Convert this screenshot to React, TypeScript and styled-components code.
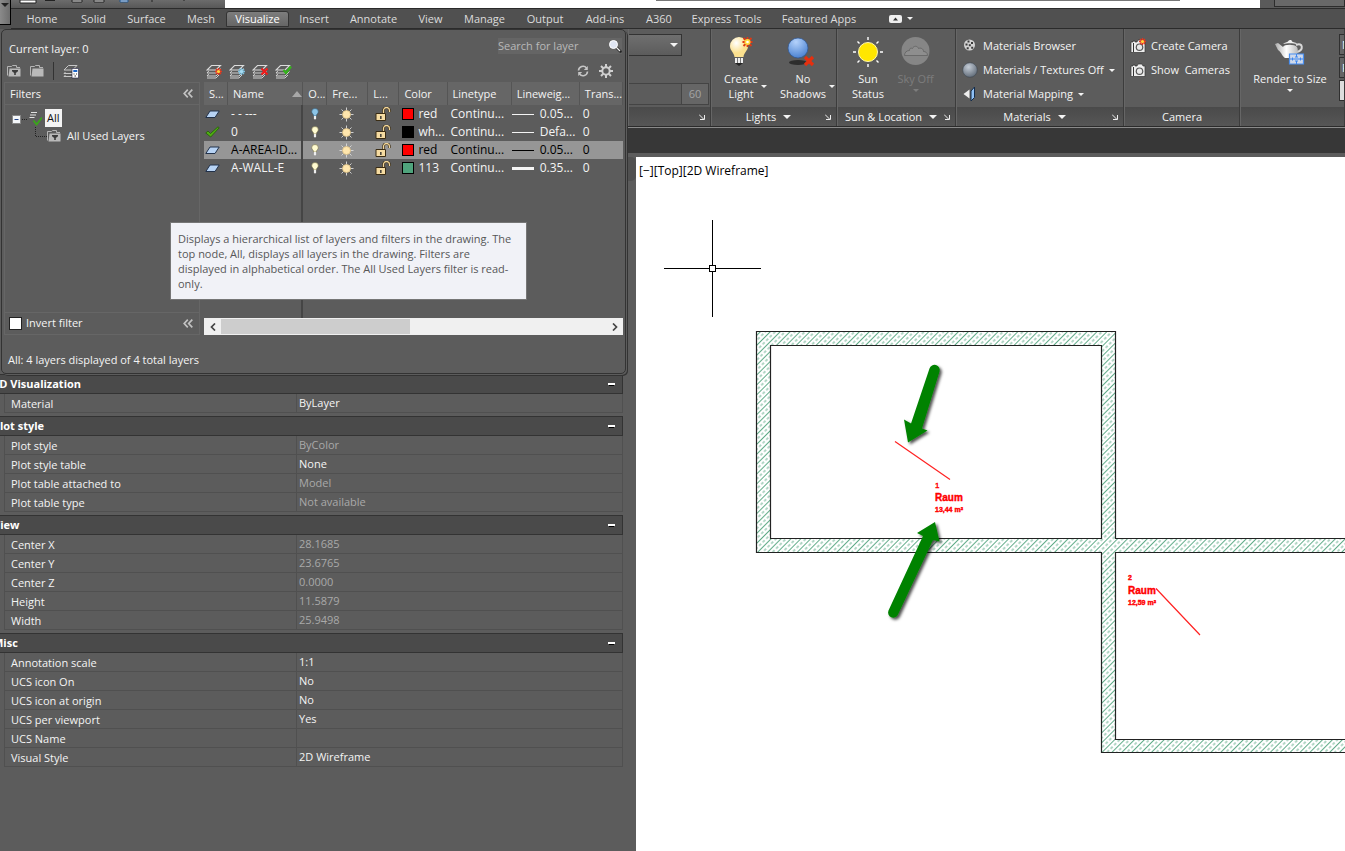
import React from "react";
import styled, { createGlobalStyle, css } from "styled-components";

const Global = createGlobalStyle`
  * { box-sizing: border-box; }
  body { margin: 0; background: #5c5c5c; color: #f4f4f4; font: 11px/16px "Open Sans", "Noto Sans", sans-serif; }
  button, input, select { font: inherit; color: inherit; margin: 0; padding: 0; border: 0; background: none; }
  svg { display: block; flex: none; }
`;

/* ---------- application frame ---------- */

const Page = styled.div`
  display: flex;
  flex-direction: column;
  min-height: 100vh;
  overflow: hidden;
`;

const Header = styled.header`
  display: flex;
  height: 29px;
  background: #505050;
`;

const AppButton = styled.button`
  width: 11px;
  height: 25px;
  background: linear-gradient(90deg, #8a8a8a, #6e6e6e);
  border-right: 1px solid #000;
  border-bottom: 1px solid #000;
  display: flex;
  justify-content: center;
`;

const HeaderMain = styled.div`
  flex: 1;
  min-width: 0;
`;

const TitleStrip = styled.div`
  display: flex;
  height: 8px;
  overflow: hidden;
`;

const QuickAccess = styled.div`
  width: 214px;
  background: linear-gradient(#6c6c6c, #585858);
`;

const TitleFill = styled.div`
  flex: 1;
  background: #fff;
  padding: 0 80px 0 431px;
`;

const TitleEdge = styled.div`
  height: 1px;
  background: #777;
`;

const HelpSearch = styled.div`
  width: 85px;
  background: #5a5a5a;
  padding-left: 14px;
  overflow: hidden;
`;

const HelpField = styled.div`
  height: 7px;
  border: 1px solid #2c2c2c;
  border-top: 0;
  background: #686868;
`;

const TabBar = styled.nav`
  display: flex;
  height: 21px;
  padding-left: 3px;
  border-top: 1px solid #2b2b2b;
  border-bottom: 1px solid #2b2b2b;
`;

const Tab = styled.button<{ $w: number; $active?: boolean }>`
  width: ${(p) => p.$w}px;
  height: 20px;
  color: #dcdcdc;
  white-space: nowrap;
  ${(p) =>
    p.$active &&
    css`
      color: #fff;
      margin-top: 2px;
      height: 16px;
      line-height: 14px;
      border: 1px solid #333;
      border-radius: 3px 3px 0 0;
      background: linear-gradient(#7d7d7d, #666);
    `}
`;

const MinimizeTabs = styled.button`
  display: flex;
  align-items: center;
  gap: 5px;
  margin-left: 22px;
`;

const Workspace = styled.main`
  flex: 1;
  display: flex;
`;

const Side = styled.aside`
  flex: 0 0 628px;
  overflow: hidden;
`;

const Work = styled.section`
  flex: 1;
  min-width: 0;
  display: flex;
  flex-direction: column;
`;

/* ---------- layer palette ---------- */

const Palette = styled.section`
  position: relative;
  width: 625px;
  margin-left: 1px;
  padding: 6px 2px 4px;
  border: 1px solid #333;
  border-radius: 5px;
  background: #5c5c5c;
  box-shadow: 1px 1px 0 #5c5c5c, 2px 2px 0 #333;
`;

const PaletteTop = styled.div`
  display: flex;
  justify-content: space-between;
  padding: 2px 1px 0 5px;
  height: 24px;
`;

const CurrentLayer = styled.div`
  padding-top: 3px;
`;

const SearchBox = styled.label`
  display: flex;
  align-items: center;
  width: 124px;
  height: 16px;
  background: #656565;
`;

const SearchInput = styled.input`
  width: 110px;
  height: 16px;
  outline: 0;
  &::placeholder { color: #b9b9b9; opacity: 1; }
`;

const Toolbar = styled.div`
  display: flex;
  align-items: center;
  height: 22px;
  padding: 0 10px 0 3px;
`;

const ToolGroup = styled.div<{ $w?: number; $gap: number }>`
  display: flex;
  align-items: center;
  gap: ${(p) => p.$gap}px;
  ${(p) => (p.$w ? `width: ${p.$w}px;` : "margin-left: auto;")}
`;

const Divider = styled.span`
  width: 1px;
  height: 18px;
  background: #333;
`;

const IconButton = styled.button`
  display: flex;
  align-items: center;
  justify-content: center;
`;

const PaletteBody = styled.div`
  display: flex;
  gap: 4px;
  height: 253px;
`;

const FilterPane = styled.div`
  width: 196px;
  display: flex;
  flex-direction: column;
  border: 1px solid #666;
`;

const PaneRow = styled.div<{ $foot?: boolean }>`
  display: flex;
  align-items: center;
  justify-content: space-between;
  height: 22px;
  padding: 0 6px 0 5px;
  border: 0 solid #666;
  ${(p) => (p.$foot ? "border-top-width: 1px; padding: 0 6px 1px 4px;" : "border-bottom-width: 1px;")}
`;

const Tree = styled.ul`
  flex: 1;
  margin: 0;
  padding: 4px 0 0 6px;
  list-style: none;
`;

const TreeItem = styled.li<{ $indent?: number }>`
  display: flex;
  align-items: center;
  height: 18px;
  padding-left: ${(p) => p.$indent || 0}px;
`;

const TreeLabel = styled.span<{ $on?: boolean }>`
  height: 18px;
  line-height: 18px;
  margin-left: ${(p) => (p.$on ? 3 : 4)}px;
  padding: 0 2px;
  ${(p) => p.$on && "background:#f4f4f4;color:#111;"}
`;

const CheckLabel = styled.label`
  display: flex;
  align-items: center;
  gap: 4px;
`;

const CheckBox = styled.input`
  appearance: none;
  width: 13px;
  height: 13px;
  background: #fff;
  border: 1px solid #222;
`;

const LayerPane = styled.div`
  flex: 1;
  min-width: 0;
  display: flex;
  flex-direction: column;
`;

const LayerTable = styled.table`
  flex: 1;
  width: 100%;
  table-layout: fixed;
  border-spacing: 0;
  th, td { padding: 0; text-align: left; font-weight: 400; white-space: nowrap; overflow: hidden; }
`;

const HeadCell = styled.th`
  height: 23px;
  background: #666;
  border-right: 1px solid #555;
`;

const HeadText = styled.div`
  padding-left: 5px;
  display: flex;
  justify-content: space-between;
  align-items: center;
`;

const Row = styled.tr<{ $on?: boolean }>`
  height: 18px;
  font-size: 12px;
  ${(p) => p.$on && "background:#969696;color:#000;"}
`;

const NameCell = styled.td`
  border-right: 2px solid #454545;
`;

const Cell = styled.div<{ $pad?: number; $gap?: number }>`
  display: flex;
  align-items: center;
  gap: ${(p) => p.$gap || 0}px;
  height: 18px;
  padding-left: ${(p) => p.$pad || 0}px;
`;

const Swatch = styled.span<{ $c: string }>`
  flex: none;
  width: 12px;
  height: 12px;
  border: 1px solid #000;
  background: ${(p) => p.$c};
`;

const Weight = styled.span<{ $h: number }>`
  flex: none;
  width: 22px;
  height: ${(p) => p.$h}px;
  background: currentColor;
`;

const ScrollBar = styled.div`
  display: flex;
  align-items: center;
  height: 17px;
  background: #f0f0f0;
`;

const ScrollButton = styled.button`
  width: 17px;
  height: 17px;
  display: flex;
  align-items: center;
  justify-content: center;
`;

const ScrollTrack = styled.div`
  flex: 1;
  height: 15px;
`;

const ScrollThumb = styled.div`
  width: 49%;
  height: 15px;
  background: #cdcdcd;
`;

const Status = styled.div`
  padding: 17px 0 0 4px;
  height: 34px;
`;

const Tooltip = styled.div`
  position: absolute;
  left: 168px;
  top: 192px;
  width: 357px;
  padding: 8px 6px 8px 7px;
  border: 1px solid #767676;
  background: #f1f2f7;
  color: #575757;
  line-height: 15px;
`;

/* ---------- property list ---------- */

const Section = styled.section`
  width: 623px;
  margin-bottom: 3px;
`;

const SectionHead = styled.button`
  display: flex;
  align-items: center;
  justify-content: space-between;
  width: 100%;
  height: 20px;
  padding-right: 7px;
  overflow: hidden;
  border: 1px solid #333;
  border-left: 0;
  background: #4a4a4a;
  color: #fff;
  font-weight: 700;
`;

const SectionTitle = styled.span`
  margin-left: -7px;
`;

const PropTable = styled.table`
  width: 619px;
  margin-left: 4px;
  table-layout: fixed;
  border-spacing: 0;
  border-left: 1px solid #505050;
  th, td {
    height: 19px;
    line-height: 16px;
    border-bottom: 1px solid #505050;
    text-align: left;
    font-weight: 400;
  }
`;

const PropName = styled.th`
  width: 291px;
  padding: 0 0 0 6px;
  vertical-align: bottom;
`;

const PropValue = styled.td<{ $dim?: boolean }>`
  padding: 0 0 0 2px;
  border-left: 1px solid #505050;
  border-right: 1px solid #505050;
  color: ${(p) => (p.$dim ? "#a9a9a9" : "#f4f4f4")};
`;

/* ---------- ribbon ---------- */

const Ribbon = styled.div`
  display: flex;
  height: 98px;
  border-bottom: 1px solid #2b2b2b;
`;

const Panel = styled.section<{ $w?: number }>`
  ${(p) => (p.$w ? `flex: 0 0 ${p.$w}px;` : "flex: 1 1 0;")}
  min-width: 0;
  display: flex;
  flex-direction: column;
  overflow: hidden;
  border-right: 1px solid #3c3c3c;
  border-left: 1px solid #666;
`;

const PanelBody = styled.div<{ $col?: boolean }>`
  flex: 1;
  display: flex;
  flex-direction: ${(p) => (p.$col ? "column" : "row")};
  padding-top: 5px;
`;

const PanelTitle = styled.div`
  display: flex;
  align-items: center;
  height: 19px;
  background: linear-gradient(#4a4a4a, #565656);
`;

const PanelName = styled.span`
  flex: 1;
  display: flex;
  align-items: center;
  justify-content: center;
  gap: 7px;
  white-space: nowrap;
`;

const LaunchButton = styled.button`
  padding: 0 5px 0 0;
`;

const BigButton = styled.button<{ $w: number; $off?: boolean }>`
  width: ${(p) => p.$w}px;
  display: flex;
  flex-direction: column;
  align-items: center;
  padding-top: 2px;
  line-height: 15px;
  white-space: nowrap;
  color: ${(p) => (p.$off ? "#7d7d7d" : "inherit")};
`;

const BigLabel = styled.span<{ $split?: boolean }>`
  display: flex;
  align-items: center;
  gap: 3px;
  padding: 3px 0 3px ${(p) => (p.$split ? 9 : 0)}px;
`;

const SmallButton = styled.button`
  display: flex;
  align-items: center;
  gap: 5px;
  height: 24px;
  padding-left: 5px;
  white-space: nowrap;
`;

const ComboBox = styled.button`
  width: 53px;
  height: 22px;
  display: flex;
  align-items: center;
  justify-content: flex-end;
  padding-right: 3px;
  border: 1px solid #333;
  border-left: 0;
  background: linear-gradient(#6f6f6f, #5c5c5c);
`;

const ValueRow = styled.div`
  display: flex;
  width: 80px;
  height: 22px;
  margin-top: 27px;
  border: 1px solid #444;
  border-left: 0;
  color: #a4a4a4;
`;

const ValueBox = styled.div`
  flex: 1;
  border-right: 1px solid #444;
`;

const ValueNumber = styled.div`
  width: 26px;
  line-height: 20px;
  text-align: center;
  background: #666;
`;

const EdgeStack = styled.div`
  margin-left: auto;
  width: 5px;
  display: flex;
  flex-direction: column;
  gap: 2px;
`;

const EdgeButton = styled.button<{ $light?: boolean }>`
  width: 20px;
  height: 21px;
  padding-left: 2px;
  text-align: left;
  border: 1px solid #2f2f2f;
  background: ${(p) => (p.$light ? "#ddd" : "#656565")};
`;

const FileBar = styled.div`
  height: 30px;
  border-top: 1px solid #8a8a8a;
  border-bottom: 4px solid #5c5c5c;
  background: #373737;
`;

const CanvasRow = styled.div`
  flex: 1;
  display: flex;
`;

const Grip = styled.div`
  width: 8px;
  height: 24px;
  border-radius: 0 5px 5px 0;
  background: #505050;
`;

const Canvas = styled.div`
  flex: 1;
  min-width: 0;
  position: relative;
  background: #fff;
`;

const Drawing = styled.svg`
  position: absolute;
  inset: 0;
  width: 100%;
  height: 100%;
`;

const ViewLabel = styled.div`
  position: relative;
  padding: 6px 0 0 3px;
  font-size: 12px;
  color: #000;
`;

/* ---------- icons ---------- */

const Caret = ({ s = 8 }: { s?: number }) => (
  <svg width={s} height={s / 2} viewBox="0 0 8 4"><path d="M0 0h8L4 4z" fill="currentColor" /></svg>
);

const Launcher = () => (
  <svg width="6" height="6" viewBox="0 0 6 6" fill="none" stroke="#eee"><path d="M0 .5l4.500 4.500M5.500 1v4.500H1" /></svg>
);

const Chevrons = () => (
  <svg width="10" height="9" viewBox="0 0 10 9" fill="none" stroke="#c2c2c2" strokeWidth="1.700"><path d="M4.800 .7L1.200 4.500 4.800 8.300M9.300 .7L5.700 4.500 9.300 8.300" /></svg>
);

const Folder = ({ filter }: { filter?: boolean }) => (
  <svg width="14" height="12" viewBox="0 0 14 12">
    <path d="M.5 10.500V1.500h4l1-1h4v2h3.500" fill="none" stroke="#b5b5b5" />
    <path d="M2.500 3.500H13.500v8H1.500z" fill="#b9b9b9" />
    {filter && <path d="M5 5h6v1.200L8.800 8v2H7.200V8L5 6.200z" fill="#3c3c3c" />}
  </svg>
);

const Sheets = () => (
  <g stroke="#dcdcdc" strokeWidth="1.100" fill="none">
    <path d="M5.500 1.500h9L10 6H1z" />
    <path d="M2.800 7L1 9h9l4.500-4.500M2.800 10L1 12h9l4.500-4.500M1 14h9l3-3" strokeWidth=".9" />
  </g>
);

const Spark = ({ x, y, c = "#e5351b", d = "#ffd83c" }: { x: number; y: number; c?: string; d?: string }) => (
  <g transform={`translate(${x} ${y})`}>
    <path d="M-3.500 0h7M0-3.500v7M-2.500-2.500l5 5M-2.500 2.500l5-5" stroke={c} strokeWidth="1.300" />
    <circle r="1.600" fill={d} />
  </g>
);

type Mark = "new" | "freeze" | "delete" | "current";

const LayerAction = ({ mark }: { mark: Mark }) => (
  <svg width="17" height="15" viewBox="0 0 17 15">
    <Sheets />
    {mark === "new" && <Spark x={12.500} y={7.500} />}
    {mark === "freeze" && <Spark x={12.500} y={7.500} c="#7fc0dd" d="#a9dcf2" />}
    {mark === "delete" && <path d="M9.500 4.500l6 6m0-6l-6 6" stroke="#ee1c1c" strokeWidth="2.200" />}
    {mark === "current" && <path d="M8.500 6l2.500 3L16 2.500" fill="none" stroke="#35b31c" strokeWidth="2.300" />}
  </svg>
);

const LayerStates = () => (
  <svg width="17" height="15" viewBox="0 0 17 15">
    <g stroke="#c8c8c8" fill="none"><path d="M5.500 1.500h8.500L9.500 6H1zM2.500 8L1 9.500h8M2.500 11L1 12.500h8" /></g>
    <path d="M9 4.500h6.500v9.500H9z" fill="#fff" stroke="#224" strokeWidth=".6" />
    <path d="M10.300 6h4v2h-4z" fill="#1a64c8" />
    <path d="M10.500 10h1m1.500 0h1m-2.500 2h1.500" stroke="#333" />
  </svg>
);

const Magnifier = () => (
  <svg width="14" height="14" viewBox="0 0 14 14">
    <path d="M8.500 8.500l4 4" stroke="#222" strokeWidth="2.500" strokeLinecap="round" />
    <path d="M8.500 8.500l3.500 3.500" stroke="#eee" strokeWidth="1.200" />
    <circle cx="5.500" cy="5.500" r="4" fill="#dfe5f2" stroke="#fff" />
  </svg>
);

const Refresh = () => (
  <svg width="12" height="12" viewBox="0 0 12 12" fill="none" stroke="#c6c6c6" strokeWidth="1.600">
    <path d="M1.500 5.500A4.500 4.500 0 0 1 9.500 3M10.500 6.500A4.500 4.500 0 0 1 2.500 9" />
    <path d="M10.800 1v4h-4zM1.200 11v-4h4z" fill="#c6c6c6" stroke="none" />
  </svg>
);

const Gear = () => (
  <svg width="14" height="14" viewBox="-7 -7 14 14" fill="none" stroke="#d0d0d0">
    <circle r="3.700" strokeWidth="2" />
    <path d="M0-7v3M0 7V4M-7 0h3M7 0H4M-5-5l2.200 2.200M5 5L2.800 2.800M-5 5l2.200-2.200M5-5L2.800-2.800" strokeWidth="2" />
  </svg>
);

const LayerSheet = () => (
  <svg width="15" height="9" viewBox="0 0 15 9"><path d="M5 1h9.200L10 7.500H.8z" fill="#b7d3f4" stroke="#22324a" /></svg>
);

const Tick = () => (
  <svg width="15" height="12" viewBox="0 0 15 12"><path d="M.8 7L3 5l2.500 2.500L13 .8l1.200 1L5.700 11z" fill="#4fae12" stroke="#245c08" strokeWidth=".8" /></svg>
);

const Bulb = ({ off }: { off?: boolean }) => (
  <svg width="8" height="12" viewBox="0 0 8 12">
    <path d="M4 .5a3.300 3.300 0 0 1 3.300 3.300C7.300 5.800 5.300 6 5.300 8H2.700C2.700 6 .7 5.800.7 3.800A3.300 3.300 0 0 1 4 .5z" fill={off ? "#8cc4e6" : "#fffbd0"} stroke={off ? "#35607c" : "#77704a"} strokeWidth=".6" />
    <path d="M2.900 8h2.200v3.300H2.900z" fill="#eee" />
  </svg>
);

const Sun = () => (
  <svg width="15" height="15" viewBox="-7.500 -7.500 15 15">
    <path d="M0-7v3M0 7V4M-7 0h3M7 0H4M-5-5l2 2M5 5L3 3M-5 5l2-2M5-5L3-3" stroke="#ddd" strokeWidth=".9" />
    <circle r="4" fill="#ffe6ad" stroke="#d9bb80" strokeWidth=".7" />
  </svg>
);

const Unlock = () => (
  <svg width="16" height="14" viewBox="0 0 16 14">
    <path d="M8.500 7V3.500a3 3 0 0 1 6 0V5" fill="none" stroke="#3a2c14" strokeWidth="2.600" />
    <path d="M8.500 7V3.500a3 3 0 0 1 6 0V5" fill="none" stroke="#f3d79b" strokeWidth="1.300" />
    <path d="M1 6.500h9.500v7H1z" fill="#f6dca2" stroke="#3a2c14" />
    <path d="M5.200 9h1.300v3H5.200z" fill="#222" />
  </svg>
);

const SortUp = () => <svg width="10" height="6" viewBox="0 0 10 6"><path d="M5 0l5 6H0z" fill="#a8a8a8" /></svg>;

const RootNode = () => (
  <svg width="31" height="18" viewBox="0 0 31 18">
    <path d="M1.500 6.500h8v8h-8z" fill="#f4f7fa" stroke="#888" />
    <path d="M3.500 10.500h4" stroke="#224488" />
    <path d="M11 10.500h6" stroke="#222" strokeDasharray="1 1" />
    <g stroke="#e2e2e2" strokeWidth="1.200" fill="none"><path d="M20 3.500h6M19 6h6M18.500 8.500h5" /></g>
    <path d="M22.500 11.500l3 4L31 8.500" fill="none" stroke="#3aa51a" strokeWidth="1.900" />
  </svg>
);

const Branch = () => <svg width="12" height="18" viewBox="0 0 12 18"><path d="M.5 0v9.500H12" fill="none" stroke="#222" strokeDasharray="1 1" /></svg>;

const CreateLightIcon = () => (
  <svg width="32" height="32" viewBox="0 0 32 32">
    <defs><radialGradient id="lb" cx=".35" cy=".3"><stop offset="0" stopColor="#fff" /><stop offset="1" stopColor="#fbe08e" /></radialGradient></defs>
    <path d="M14 1a9 9 0 0 1 9 9c0 5-4 6-4.500 11h-9C9 16 5 15 5 10a9 9 0 0 1 9-9z" fill="url(#lb)" />
    <path d="M10 22h8v5h-8z" fill="#eee" /><path d="M12.500 22v5m3-5v5" stroke="#777" />
    <path d="M10 27h8l-4 3z" fill="#222" />
    <g transform="translate(22.500 6)"><path d="M-5 0H5M0-5V5M-4-4l8 8M-4 4l8-8" stroke="#e03914" strokeWidth="1.800" /><circle r="3" fill="#ffd83c" /><circle r="1.300" fill="#fff" /></g>
  </svg>
);

const NoShadowsIcon = () => (
  <svg width="32" height="32" viewBox="0 0 32 32">
    <defs><radialGradient id="nb" cx=".4" cy=".2" r=".8"><stop offset="0" stopColor="#b4d2fb" /><stop offset="1" stopColor="#4c83d2" /></radialGradient></defs>
    <ellipse cx="11" cy="26.500" rx="9" ry="2.600" fill="#2d2d2d" />
    <circle cx="11" cy="12" r="10" fill="url(#nb)" stroke="#2e5797" strokeWidth=".7" />
    <path d="M18 21l8 8m0-8l-8 8" stroke="#e62f0e" strokeWidth="3.200" />
  </svg>
);

const SunStatusIcon = () => (
  <svg width="32" height="32" viewBox="-16 -16 32 32">
    <g stroke="#fff" strokeWidth="1.400"><path d="M0-15v3M0 15v-3M-15 0h3M15 0h-3M-10.500-10.500l2 2M10.500 10.500l-2-2M-10.500 10.500l2-2M10.500-10.500l-2 2" /></g>
    <circle r="9.500" fill="#ffe600" stroke="#fff7b0" />
  </svg>
);

const SkyOffIcon = () => (
  <svg width="32" height="32" viewBox="0 0 32 32">
    <circle cx="15.500" cy="15" r="14" fill="#868686" />
    <path d="M4.500 19.500h23c0-3-2-4-4-4 0-3-3-4-5-3-1-3-5-3-6 0-2-1-3 0-3 2-3 0-5 2-5 5z" fill="#8e8e8e" stroke="#626262" strokeWidth=".8" />
  </svg>
);

const MaterialsIcon = () => (
  <svg width="16" height="16" viewBox="0 0 16 16">
    <circle cx="7.500" cy="7" r="5.500" fill="#d4d4d4" />
    <path d="M5.500 2.500h2v2h-2zM9 4h2v2H9zM3.500 5.500h2v2h-2zM6.800 6.300h2v2h-2zM4.700 9.200h2v2h-2zM9.200 8.700h2v2h-2z" fill="#3b3b3b" />
  </svg>
);

const TexturesIcon = () => (
  <svg width="16" height="16" viewBox="0 0 16 16">
    <defs><radialGradient id="tx" cx=".4" cy=".3" r=".8"><stop offset="0" stopColor="#c4ccd6" /><stop offset="1" stopColor="#56616e" /></radialGradient></defs>
    <circle cx="8" cy="8" r="7.300" fill="url(#tx)" stroke="#3c454f" strokeWidth=".6" />
  </svg>
);

const MappingIcon = () => (
  <svg width="16" height="16" viewBox="0 0 16 16">
    <path d="M1.500 8L7.500 3.500v9z" fill="#eee" />
    <path d="M9 5l3.500-4v10.500L9 15z" fill="#8fc0f5" stroke="#152c4a" />
  </svg>
);

const CameraIcon = ({ spark }: { spark?: boolean }) => (
  <svg width="16" height="16" viewBox="0 0 16 16">
    <path d="M1 4h2V3h2v1h2l1-2h4l1 2h2v10.500H1z" fill="#eee" stroke="#333" strokeWidth=".7" />
    <path d="M3.500 5v9" stroke="#333" />
    <circle cx="9.500" cy="9.200" r="3.800" fill="#555" /><circle cx="9.500" cy="9.200" r="2.600" fill="#e8e8e8" />
    {spark && <Spark x={12.500} y={3.500} />}
  </svg>
);

const TeapotIcon = () => (
  <svg width="32" height="32" viewBox="0 0 32 32">
    <defs><linearGradient id="tp"><stop offset="0" stopColor="#aaa" /><stop offset=".5" stopColor="#fff" /><stop offset="1" stopColor="#bbb" /></linearGradient></defs>
    <path d="M22 9c7-3 8 5 1 7" fill="none" stroke="#d8d8d8" strokeWidth="2" />
    <path d="M1 8l3-1 5 4c1-3 12-3 14 0 2 4 0 9-3 11h-9c-3-2-3-5-7-8z" fill="url(#tp)" />
    <path d="M9 8c2-2 4-1.500 5-2.500 1-2 4-2 4 0 1 1 4 .5 5 2.500-4-1-10-1-14 0z" fill="#eee" />
    <path d="M15.500 18h14v10h-14z" fill="#cfd9ea" stroke="#4a90f2" strokeWidth="1.200" />
    <path d="M22.500 18v3m0 4v3M16 23h13M18.500 21.500v3m8-3v3m-5.500-3.500h3m-3 4h3" stroke="#3c86ef" fill="none" />
  </svg>
);

/* ---------- data ---------- */

const tabs: [string, number][] = [
  ["Home", 56], ["Solid", 47], ["Surface", 59], ["Mesh", 50], ["Visualize", 63], ["Insert", 50],
  ["Annotate", 69], ["View", 45], ["Manage", 63], ["Output", 58], ["Add-ins", 62], ["A360", 46],
  ["Express Tools", 89], ["Featured Apps", 96],
];

const columns: [string, number][] = [
  ["S...", 24], ["Name", 75], ["O...", 24], ["Fre...", 41], ["L...", 31], ["Color", 48],
  ["Linetype", 64], ["Lineweig...", 68], ["Trans...", 43],
];

const layers = [
  { name: "- - ---", off: true, color: "#f00", label: "red", weight: "0.05...", h: 1 },
  { name: "0", current: true, color: "#000", label: "wh...", weight: "Defa...", h: 1 },
  { name: "A-AREA-ID...", on: true, color: "#f00", label: "red", weight: "0.05...", h: 1 },
  { name: "A-WALL-E", color: "#4fa37c", label: "113", weight: "0.35...", h: 3 },
];

const sections: { title: string; rows: [string, string, boolean?][] }[] = [
  { title: "3D Visualization", rows: [["Material", "ByLayer"]] },
  {
    title: "Plot style",
    rows: [["Plot style", "ByColor", true], ["Plot style table", "None"], ["Plot table attached to", "Model", true], ["Plot table type", "Not available", true]],
  },
  {
    title: "View",
    rows: [["Center X", "28.1685", true], ["Center Y", "23.6765", true], ["Center Z", "0.0000", true], ["Height", "11.5879", true], ["Width", "25.9498", true]],
  },
  {
    title: "Misc",
    rows: [["Annotation scale", "1:1"], ["UCS icon On", "No"], ["UCS icon at origin", "No"], ["UCS per viewport", "Yes"], ["UCS Name", ""], ["Visual Style", "2D Wireframe"]],
  },
];

/* ---------- parts ---------- */

const LayerPalette = () => (
  <Palette>
    <PaletteTop>
      <CurrentLayer>Current layer: 0</CurrentLayer>
      <SearchBox>
        <SearchInput aria-label="Search for layer" placeholder="Search for layer" />
        <Magnifier />
      </SearchBox>
    </PaletteTop>
    <Toolbar>
      <ToolGroup $w={199} $gap={9}>
        <IconButton aria-label="New property filter"><Folder filter /></IconButton>
        <IconButton aria-label="New group filter"><Folder /></IconButton>
        <Divider />
        <IconButton aria-label="Layer states"><LayerStates /></IconButton>
      </ToolGroup>
      <ToolGroup $w={90} $gap={6}>
        <IconButton aria-label="New layer"><LayerAction mark="new" /></IconButton>
        <IconButton aria-label="New frozen layer"><LayerAction mark="freeze" /></IconButton>
        <IconButton aria-label="Delete layer"><LayerAction mark="delete" /></IconButton>
        <IconButton aria-label="Set current"><LayerAction mark="current" /></IconButton>
      </ToolGroup>
      <ToolGroup $gap={10}>
        <IconButton aria-label="Refresh"><Refresh /></IconButton>
        <IconButton aria-label="Settings"><Gear /></IconButton>
      </ToolGroup>
    </Toolbar>
    <PaletteBody>
      <FilterPane>
        <PaneRow>
          Filters
          <IconButton aria-label="Collapse filters"><Chevrons /></IconButton>
        </PaneRow>
        <Tree>
          <TreeItem><RootNode /><TreeLabel $on>All</TreeLabel></TreeItem>
          <TreeItem $indent={24}><Branch /><Folder filter /><TreeLabel>All Used Layers</TreeLabel></TreeItem>
        </Tree>
        <PaneRow $foot>
          <CheckLabel><CheckBox type="checkbox" />Invert filter</CheckLabel>
          <IconButton aria-label="Collapse pane"><Chevrons /></IconButton>
        </PaneRow>
      </FilterPane>
      <LayerPane>
        <LayerTable>
          <colgroup>{columns.map(([n, w]) => <col key={n} width={w} />)}</colgroup>
          <thead>
            <tr>{columns.map(([n]) => <HeadCell key={n}><HeadText>{n}{n === "Name" && <SortUp />}</HeadText></HeadCell>)}</tr>
          </thead>
          <tbody>
            {layers.map((l) => (
              <Row key={l.name} $on={l.on}>
                <td><Cell $pad={1}>{l.current ? <Tick /> : <LayerSheet />}</Cell></td>
                <NameCell><Cell $pad={3}>{l.name}</Cell></NameCell>
                <td><Cell $pad={8}><Bulb off={l.off} /></Cell></td>
                <td><Cell $pad={12}><Sun /></Cell></td>
                <td><Cell $pad={7}><Unlock /></Cell></td>
                <td><Cell $pad={3} $gap={4}><Swatch $c={l.color} />{l.label}</Cell></td>
                <td><Cell $pad={3}>Continu...</Cell></td>
                <td><Cell $gap={6}><Weight $h={l.h} />{l.weight}</Cell></td>
                <td><Cell $pad={3}>0</Cell></td>
              </Row>
            ))}
            <tr><td /><NameCell /><td colSpan={7} /></tr>
          </tbody>
        </LayerTable>
        <ScrollBar>
          <ScrollButton aria-label="Scroll left"><svg width="6" height="8" viewBox="0 0 6 8"><path d="M5 .5L1.500 4 5 7.500" fill="none" stroke="#444" strokeWidth="1.700" /></svg></ScrollButton>
          <ScrollTrack><ScrollThumb /></ScrollTrack>
          <ScrollButton aria-label="Scroll right"><svg width="6" height="8" viewBox="0 0 6 8"><path d="M1 .5L4.500 4 1 7.500" fill="none" stroke="#444" strokeWidth="1.700" /></svg></ScrollButton>
        </ScrollBar>
      </LayerPane>
    </PaletteBody>
    <Status>All: 4 layers displayed of 4 total layers</Status>
    <Tooltip role="tooltip">
      Displays a hierarchical list of layers and filters in the drawing. The<br />
      top node, All, displays all layers in the drawing. Filters are<br />
      displayed in alphabetical order. The All Used Layers filter is read-<br />
      only.
    </Tooltip>
  </Palette>
);

const Properties = () => (
  <>
    {sections.map((s) => (
      <Section key={s.title}>
        <SectionHead>
          <SectionTitle>{s.title}</SectionTitle>
          <svg width="7" height="3" viewBox="0 0 7 3"><path d="M0 0h7v2H0z" fill="#fff" /><path d="M1 2h5v1H1z" fill="#000" /></svg>
        </SectionHead>
        <PropTable>
          <tbody>
            {s.rows.map(([k, v, dim]) => (
              <tr key={k}><PropName scope="row">{k}</PropName><PropValue $dim={dim}>{v}</PropValue></tr>
            ))}
          </tbody>
        </PropTable>
      </Section>
    ))}
  </>
);

const Title = ({ children, caret, launch }: { children?: React.ReactNode; caret?: boolean; launch?: boolean }) => (
  <PanelTitle>
    <PanelName>{children}{caret && <Caret />}</PanelName>
    {launch && <LaunchButton aria-label="Open dialog"><Launcher /></LaunchButton>}
  </PanelTitle>
);

const RibbonBar = () => (
  <Ribbon>
    <Panel $w={83}>
      <PanelBody $col>
        <ComboBox aria-label="Visual style"><Caret /></ComboBox>
        <ValueRow><ValueBox /><ValueNumber>60</ValueNumber></ValueRow>
      </PanelBody>
      <Title launch />
    </Panel>
    <Panel $w={126}>
      <PanelBody>
        <BigButton $w={58}><CreateLightIcon /><BigLabel $split><span>Create<br />Light</span><Caret s={6} /></BigLabel></BigButton>
        <BigButton $w={66}><NoShadowsIcon /><BigLabel $split><span>No<br />Shadows</span><Caret s={6} /></BigLabel></BigButton>
      </PanelBody>
      <Title caret launch>Lights</Title>
    </Panel>
    <Panel $w={119}>
      <PanelBody>
        <BigButton $w={60}><SunStatusIcon /><BigLabel>Sun<br />Status</BigLabel></BigButton>
        <BigButton $w={35} $off><SkyOffIcon /><BigLabel>Sky Off</BigLabel><Caret s={6} /></BigButton>
      </PanelBody>
      <Title caret launch>Sun &amp; Location</Title>
    </Panel>
    <Panel $w={168}>
      <PanelBody $col>
        <SmallButton><MaterialsIcon />Materials Browser</SmallButton>
        <SmallButton><TexturesIcon />Materials / Textures Off<Caret s={6} /></SmallButton>
        <SmallButton><MappingIcon />Material Mapping<Caret s={6} /></SmallButton>
      </PanelBody>
      <Title caret launch>Materials</Title>
    </Panel>
    <Panel $w={116}>
      <PanelBody $col>
        <SmallButton><CameraIcon spark />Create Camera</SmallButton>
        <SmallButton><CameraIcon />Show&nbsp; Cameras</SmallButton>
      </PanelBody>
      <Title>Camera</Title>
    </Panel>
    <Panel>
      <PanelBody>
        <BigButton $w={98}><TeapotIcon /><BigLabel>Render to Size</BigLabel><Caret s={6} /></BigButton>
        <EdgeStack>
          <EdgeButton>N</EdgeButton>
          <EdgeButton>R</EdgeButton>
          <EdgeButton $light aria-label="Render settings" />
        </EdgeStack>
      </PanelBody>
      <Title />
    </Panel>
  </Ribbon>
);

const Plan = () => (
  <Drawing aria-label="Floor plan">
    <defs>
      <pattern id="hatch" width="7" height="5" patternUnits="userSpaceOnUse" patternTransform="rotate(45)">
        <path d="M1.500 0v5" stroke="#4fa37c" strokeWidth=".9" />
        <path d="M5 0v2.800" stroke="#4fa37c" strokeWidth=".9" />
      </pattern>
      <filter id="shadow" x="-50%" y="-50%" width="200%" height="200%">
        <feDropShadow dx="2" dy="2" stdDeviation="1.500" floodOpacity=".7" />
      </filter>
    </defs>
    <path
      d="M120.500 174.500H479.500V381.500H3000V395.500H479.500V582.500H3000V595.500H465.500V395.500H120.500ZM134.500 188.500V381.500H465.500V188.500Z"
      fill="url(#hatch)" fillRule="evenodd" stroke="#222" strokeWidth="1.200"
    />
    <g stroke="#000" fill="none" shapeRendering="crispEdges">
      <path d="M76.500 63v97M28 111.500h97" />
      <path d="M73.500 108.500h6v6h-6z" fill="#fff" />
    </g>
    <path d="M259 284.500L314 322.500M520 431.500l44 46.500" stroke="#f22" strokeWidth="1.200" />
    <g fill="#f00" stroke="#f00" strokeWidth=".4" fontFamily="Liberation Sans, sans-serif" fontWeight="700">
      <text x="299" y="331" fontSize="8" fontWeight="400">1</text>
      <text x="299" y="344" fontSize="10">Raum</text>
      <text x="299" y="355" fontSize="7">13,44 m²</text>
      <text x="492" y="423" fontSize="7">2</text>
      <text x="492" y="437" fontSize="10">Raum</text>
      <text x="492" y="448" fontSize="7">12,59 m²</text>
    </g>
    <g fill="#058205" filter="url(#shadow)">
      <path d="M293.500 211.500A5 5 0 0 1 303.500 214.500L286 271.500L291.500 273.500L272 285.500L268 262.500L275 266.500Z" />
      <path d="M299 365L303.500 384.500L297 383L262 457.500A5 5 0 0 1 252.500 453.500L287 379L281 376Z" />
    </g>
  </Drawing>
);

export default function App() {
  return (
    <Page>
      <Global />
      <Header>
        <AppButton aria-label="Application menu"><svg width="8" height="8" viewBox="0 0 8 8"><path d="M0 3h8L4 7z" fill="#222" /></svg></AppButton>
        <HeaderMain>
          <TitleStrip>
            <QuickAccess>
              <svg width="214" height="4" viewBox="0 0 214 4">
                <path d="M9 0h16v3H9z" fill="#fff" stroke="#222" /><path d="M34 0h10v1H34z" fill="#222" />
                <path d="M61 0h10v2H61zM83 0h10v2H83z" fill="#eee" stroke="#222" /><path d="M109 0h8v2h-8z" fill="#cfe3ff" stroke="#258" />
                <path d="M141 0v2m32-2v1" stroke="#222" />
              </svg>
            </QuickAccess>
            <TitleFill><TitleEdge /></TitleFill>
            <HelpSearch><HelpField /></HelpSearch>
          </TitleStrip>
          <TabBar>
            {tabs.map(([t, w]) => <Tab key={t} $w={w} $active={t === "Visualize"}>{t}</Tab>)}
            <MinimizeTabs aria-label="Minimize ribbon">
              <svg width="13" height="8" viewBox="0 0 13 8"><rect width="13" height="8" rx="2" fill="#eee" /><path d="M4 5.500L6.500 2.500 9 5.500z" fill="#333" /></svg>
              <Caret s={6} />
            </MinimizeTabs>
          </TabBar>
        </HeaderMain>
      </Header>
      <Workspace>
        <Side>
          <LayerPalette />
          <Properties />
        </Side>
        <Work>
          <RibbonBar />
          <FileBar />
          <CanvasRow>
            <Grip />
            <Canvas>
              <Plan />
              <ViewLabel>[−][Top][2D Wireframe]</ViewLabel>
            </Canvas>
          </CanvasRow>
        </Work>
      </Workspace>
    </Page>
  );
}
